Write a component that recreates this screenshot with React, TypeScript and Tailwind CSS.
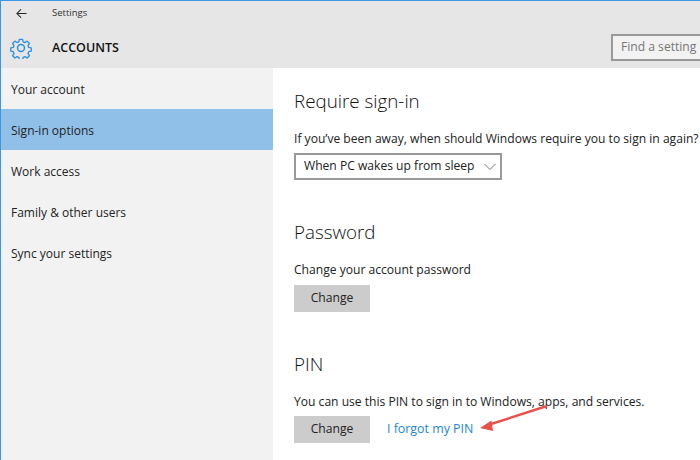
import React from 'react';

const font = { fontFamily: '"Open Sans", "Noto Sans", sans-serif' };

const navItems = ['Your account', 'Sign-in options', 'Work access', 'Family & other users', 'Sync your settings'];

const Gear = () => (
  <svg className="-mt-[1px]" width="22" height="22" viewBox="0 0 24 24" fill="none" stroke="#2b8fe3" strokeWidth="1.6" strokeLinejoin="round">
    <path d="M10 1.5h4l.6 3 2.2.9 2.600-1.700 2.800 2.800-1.700 2.600.9 2.200 3 .6v4l-3 .6-.9 2.200 1.700 2.600-2.800 2.800-2.600-1.700-2.200.9-.6 3h-4l-.6-3-2.200-.9-2.600 1.700-2.800-2.800 1.700-2.600-.9-2.200-3-.6v-4l3-.6.9-2.200-1.700-2.600 2.800-2.800 2.600 1.700 2.200-.9z" transform="translate(1.2 1.2) scale(0.9)" />
    <circle cx="12" cy="12" r="3.8" />
  </svg>
);

const ChangeButton = () => (
  <button className="w-[76px] h-[27px] bg-[#cccccc] text-[12.1px] text-[#222]">Change</button>
);

const Section = ({ title, desc, children, className }: { title: string; desc: string; children: React.ReactNode; className?: string }) => (
  <div className={className}>
    <div className="text-[18.8px] leading-[28px] font-light text-[#111]">{title}</div>
    <div className="mt-[15px] text-[12.1px] leading-[18px] text-[#222] whitespace-nowrap">{desc}</div>
    <div className="mt-[5px]">{children}</div>
  </div>
);

export default function App() {
  return (
    <div style={font} className="relative w-[700px] h-[460px] overflow-hidden bg-white border-t border-l border-[#3b97e3] flex flex-col">
      <div className="h-[67px] shrink-0 bg-[#e6e6e6] flex flex-col">
        <div className="h-[25px] flex items-center pl-[15px]">
          <svg width="11" height="11" viewBox="0 0 12 12" fill="none" stroke="#222" strokeWidth="1.1">
            <path d="M11.500 6H1M5.500 1.500 1 6l4.500 4.500" />
          </svg>
          <span className="ml-[25px] text-[9.5px] text-[#333]">Settings</span>
        </div>
        <div className="flex-1 flex items-center pl-[9px] pt-[2px]">
          <Gear />
          <span className="ml-[20px] mt-[1px] text-[12.5px] font-semibold text-[#111]">ACCOUNTS</span>
          <div className="ml-auto w-[100px] h-[27px] -mr-[11px] -mt-[1px] border-2 border-[#999] bg-[#f2f2f2] pl-[8px] flex items-center text-[12.1px] text-[#777] whitespace-nowrap overflow-hidden">
            Find a setting
          </div>
        </div>
      </div>
      <div className="flex-1 flex min-w-0">
        <div className="w-[272px] shrink-0 bg-[#f2f2f2]">
          {navItems.map((item) => (
            <div
              key={item}
              className={`h-[41px] pl-[10px] pt-[2px] flex items-center text-[12px] text-[#222] ${item === 'Sign-in options' ? 'bg-[#90c0e8]' : ''}`}
            >
              {item}
            </div>
          ))}
        </div>
        <div className="flex-1 min-w-0 pl-[21px] pt-[19px]">
          <Section title="Require sign-in" desc="If you’ve been away, when should Windows require you to sign in again?">
            <div className="w-[208px] h-[27px] border-2 border-[#999] flex items-center justify-between pl-[8px] pr-[4px] text-[12.1px] text-[#222]">
              When PC wakes up from sleep
              <svg width="12" height="8" viewBox="0 0 12 8" fill="none" stroke="#777" strokeWidth="1">
                <path d="M.5 1 6 6.500 11.500 1" />
              </svg>
            </div>
          </Section>
          <Section className="mt-[38px]" title="Password" desc="Change your account password">
            <ChangeButton />
          </Section>
          <Section className="mt-[38px]" title="PIN" desc="You can use this PIN to sign in to Windows, apps, and services.">
            <div className="flex items-center">
              <ChangeButton />
              <span className="ml-[17px] text-[12.4px] text-[#1a86d8]">I forgot my PIN</span>
            </div>
          </Section>
        </div>
      </div>
      <svg className="absolute left-[479px] top-[403px]" width="70" height="30" viewBox="0 0 70 30" fill="none">
        <path d="M67 2 8 21" stroke="#e8504a" strokeWidth="2.4" />
        <path d="M0 24 11.500 16.500l1.500 10.500z" fill="#e8504a" />
      </svg>
    </div>
  );
}
